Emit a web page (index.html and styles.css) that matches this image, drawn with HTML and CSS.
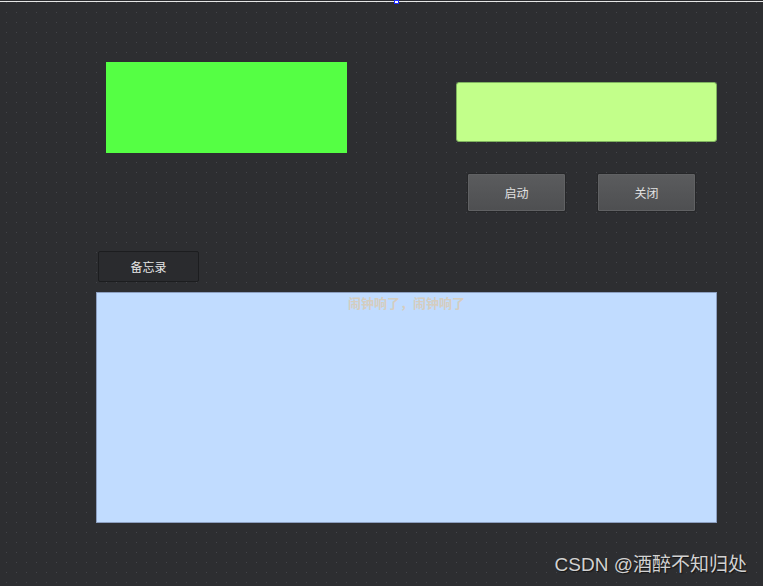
FILE: index.html
```html
<!DOCTYPE html>
<html lang="zh">
<head>
<meta charset="utf-8">
<title>闹钟</title>
<link rel="stylesheet" href="styles.css">
</head>
<body>
<div class="page">
  <div class="topline"><span class="handle"></span></div>
  <div class="top-row">
    <div class="green-box"></div>
    <div class="right-col">
      <div class="display-box"></div>
      <div class="btn-row">
        <button class="btn">启动</button>
        <button class="btn">关闭</button>
      </div>
    </div>
  </div>
  <button class="memo-btn">备忘录</button>
  <div class="memo-area">
    <div class="memo-text">闹钟响了，闹钟响了</div>
  </div>
  <div class="watermark">CSDN @酒醉不知归处</div>
</div>
</body>
</html>
```

FILE: styles.css
```css
html, body {
  margin: 0;
  padding: 0;
}
body {
  background-color: #2d2e31;
  font-family: "Noto Sans CJK SC", "Noto Sans", sans-serif;
}
.page {
  position: relative;
  width: 763px;
  height: 586px;
  overflow: hidden;
  background-color: #2d2e31;
  background-image: radial-gradient(circle at 6.5px 2.5px, #44454a 0.6px, transparent 1px);
  background-size: 10px 10px;
}
.topline {
  position: relative;
  margin-top: 1px;
  height: 1px;
  background: #e6e6e6;
}
.handle {
  position: absolute;
  left: 394px;
  top: -1px;
  width: 3px;
  height: 2px;
  border: 1px solid #1d2bff;
  background: #ffffff;
}
.top-row {
  display: flex;
  align-items: flex-start;
  padding-top: 60px;
}
.green-box {
  margin-left: 106px;
  width: 241px;
  height: 91px;
  background: #55ff44;
}
.right-col {
  margin-left: 109px;
  margin-top: 20px;
  width: 261px;
  display: flex;
  flex-direction: column;
}
.display-box {
  box-sizing: border-box;
  height: 60px;
  background: #c2ff8a;
  border: 1px solid #7fb35f;
  border-radius: 3px;
}
.btn-row {
  display: flex;
  gap: 31px;
  margin-top: 31px;
  padding-left: 11px;
}
.btn {
  box-sizing: border-box;
  flex: 0 0 99px;
  width: 99px;
  height: 39px;
  margin: 0;
  padding: 0;
  border: 1px solid #262729;
  border-radius: 2px;
  background: linear-gradient(#5b5c5e, #4e4f51);
  box-shadow: inset 0 0 0 1px #606163;
  color: #e2e2e2;
  font-family: "Noto Sans CJK SC", sans-serif;
  font-size: 12px;
  line-height: 37px;
}
.memo-btn {
  display: block;
  box-sizing: border-box;
  margin: 39px 0 0 98px;
  width: 101px;
  height: 31px;
  padding: 0;
  border: 1px solid #1c1d1f;
  border-radius: 2px;
  background: #2a2b2e;
  color: #e6e6e6;
  font-family: "Noto Sans CJK SC", sans-serif;
  font-size: 12px;
  line-height: 29px;
}
.memo-area {
  box-sizing: border-box;
  margin: 10px 0 0 96px;
  width: 621px;
  height: 231px;
  background: #c1dcff;
  border: 1px solid #8c9fc0;
}
.memo-text {
  text-align: center;
  font-family: "Noto Sans CJK SC", sans-serif;
  font-weight: bold;
  font-size: 13px;
  line-height: 18px;
  margin-top: 1px;
  color: #d5cdbf;
}
.watermark {
  position: absolute;
  right: 16px;
  top: 553px;
  font-family: "Liberation Sans", "Noto Sans CJK SC", sans-serif;
  font-size: 19px;
  line-height: 24px;
  color: #d2d2d2;
  text-shadow: 1px 1px 1px #151515;
}
```
